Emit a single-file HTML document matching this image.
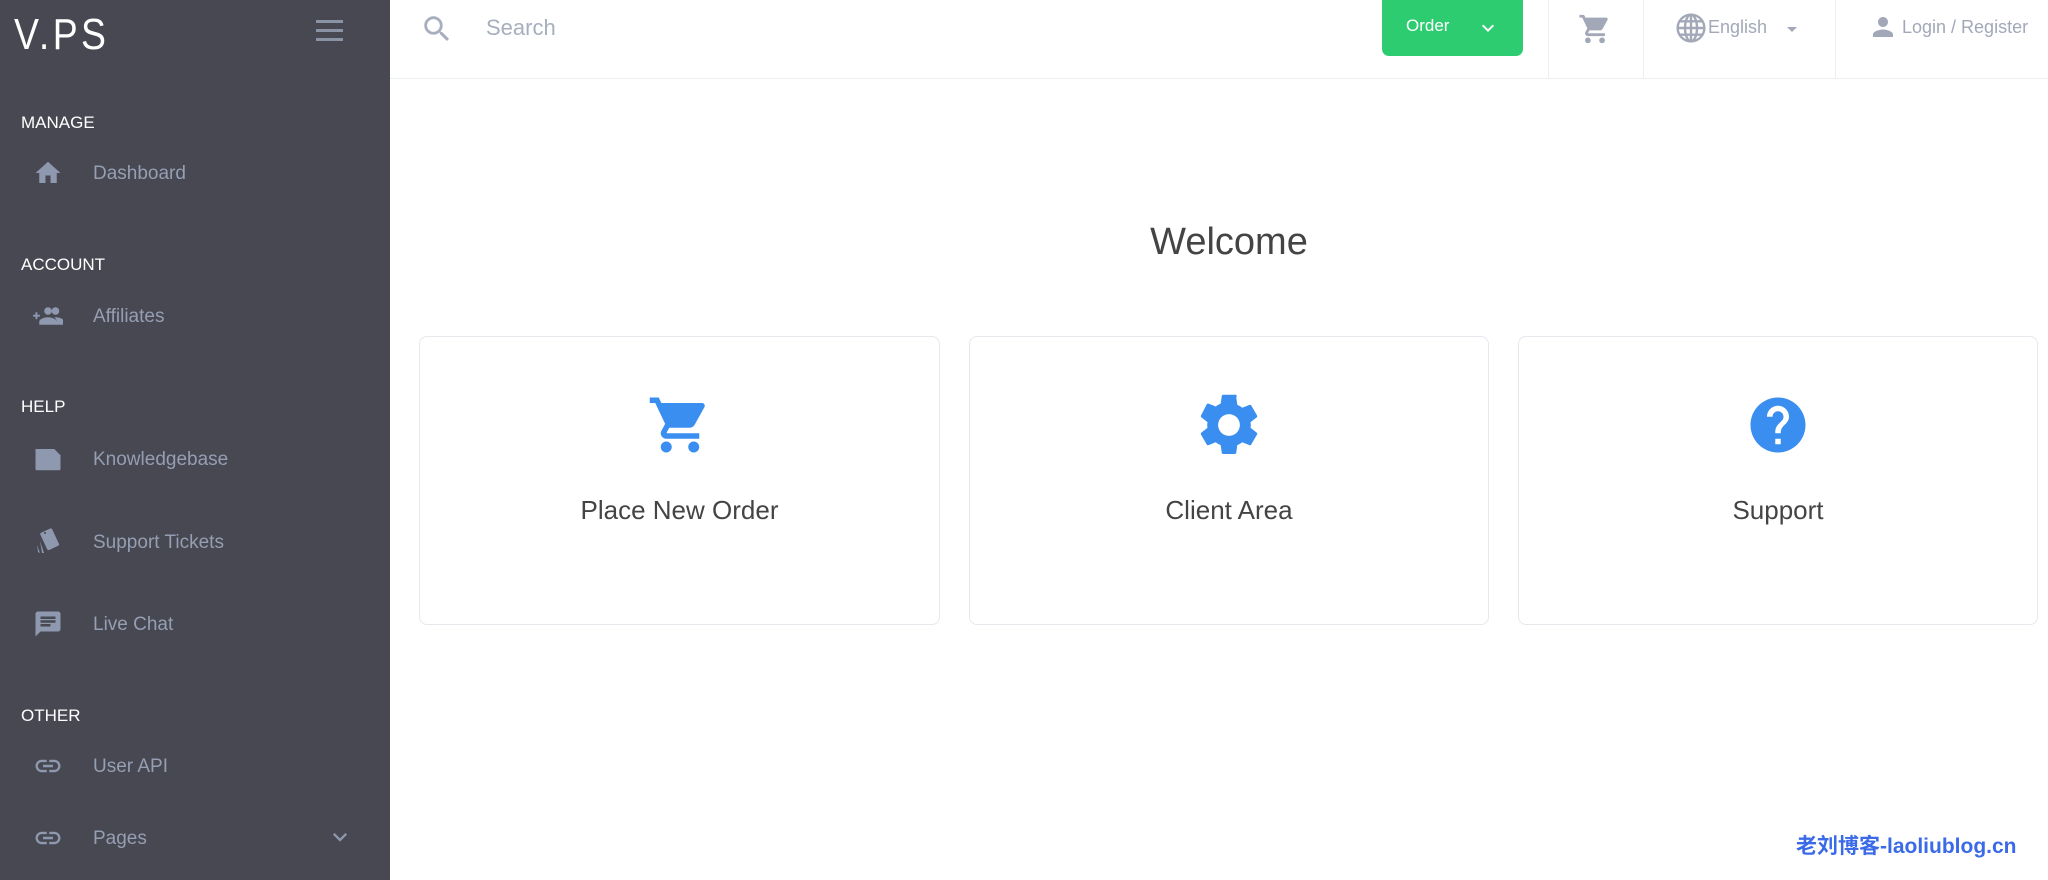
<!DOCTYPE html>
<html><head><meta charset="utf-8"><style>
*{margin:0;padding:0;box-sizing:border-box}
body{width:2048px;height:880px;overflow:hidden;background:#fff;font-family:"Liberation Sans",sans-serif;position:relative}
.sb{position:absolute;left:0;top:0;width:390px;height:880px;background:#474851}
.logo{position:absolute;left:14px;top:10px;color:#fff;font-size:44px;letter-spacing:4px;font-weight:300;transform:scaleX(0.85);transform-origin:left}
.burger{position:absolute;left:316px;top:20px;width:27px}
.burger i{display:block;height:3px;background:#8a93a6;margin-bottom:6px}
.lbl{position:absolute;left:21px;color:#fff;font-size:17px;line-height:20px}
.it{position:absolute;left:0;width:390px;height:30px;color:#959eb3;font-size:19px}
.it svg{position:absolute;left:33px;top:0;width:30px;height:30px;fill:#8e98ae}
.it span{position:absolute;left:93px;top:5px}
.hd{position:absolute;left:390px;top:0;right:0;height:79px;border-bottom:1px solid #eceef2}
.srch{position:absolute;left:486px;top:15px;color:#a7aebd;font-size:22px}
.order{position:absolute;left:1382px;top:0;width:141px;height:56px;background:#2ecc71;border-radius:0 0 7px 7px;color:#fff;font-size:17px}
.vd{position:absolute;top:0;height:79px;width:1px;background:#eceef2}
.hx{position:absolute;color:#a2a8b8;font-size:18px;top:17px}
.wel{position:absolute;left:410px;right:0;top:221px;text-align:center;font-size:38px;color:#444;}
.card{position:absolute;top:336px;height:289px;border:1px solid #e6e8ee;border-radius:8px;text-align:center}
.card .t{position:absolute;left:0;right:0;top:158px;font-size:26px;color:#444}
.card svg{position:absolute;left:50%;top:55px;margin-left:-33px;width:66px;height:66px;fill:#3a8ef0}
.wm{position:absolute;left:1796px;top:830px;color:#3b6ae8;font-size:21px;font-weight:bold;font-family:"Liberation Sans","Noto Sans CJK SC",sans-serif}
</style></head><body>
<div class="sb">
<div class="logo">V.PS</div>
<div class="burger"><i></i><i></i><i></i></div>
<div class="lbl" style="top:113px">MANAGE</div>
<div class="it" style="top:158px"><svg viewBox="0 0 24 24"><path d="M10 20v-6h4v6h5v-8h3L12 3 2 12h3v8z"/></svg><span>Dashboard</span></div>
<div class="lbl" style="top:255px">ACCOUNT</div>
<div class="it" style="top:301px"><svg viewBox="0 0 24 24"><path d="M16 11c1.66 0 3-1.34 3-3s-1.34-3-3-3-3 1.34-3 3 1.34 3 3 3zm-6 0c1.66 0 3-1.34 3-3s-1.34-3-3-3-3 1.34-3 3 1.34 3 3 3zm0 2c-2.33 0-7 1.17-7 3.5V19h14v-2.5C17 14.17 12.33 13 10 13zm6 0c-.29 0-.62.02-.97.05 1.16.84 1.97 1.97 1.97 3.45V19h6v-2.5c0-2.33-4.67-3.5-7-3.5z" transform="translate(2 0)"/><path d="M0 11h2V9h1.5v2h2v1.5h-2v2H2v-2H0z"/></svg><span>Affiliates</span></div>
<div class="lbl" style="top:397px">HELP</div>
<div class="it" style="top:444px"><svg viewBox="0 0 24 24"><path d="M2 4h15l5 5v11a1 1 0 0 1-1 1H3a1 1 0 0 1-1-1z"/></svg><span>Knowledgebase</span></div>
<div class="it" style="top:527px"><svg viewBox="0 0 30 30"><rect x="10" y="3" width="13" height="19" rx="1.5" transform="rotate(-25 16 12)"/><circle cx="12" cy="6" r="1" fill="#474851"/><path d="M7 14l4 12-2 0z M4 18l3 8-2-1z"/></svg><span>Support Tickets</span></div>
<div class="it" style="top:609px"><svg viewBox="0 0 24 24"><path d="M20 2H4c-1.1 0-2 .9-2 2v18l4-4h14c1.1 0 2-.9 2-2V4c0-1.1-.9-2-2-2zM6 9h12v2H6zm8 5H6v-2h8zm4-6H6V6h12z"/></svg><span>Live Chat</span></div>
<div class="lbl" style="top:706px">OTHER</div>
<div class="it" style="top:751px"><svg viewBox="0 0 24 24"><path d="M3.9 12c0-1.71 1.39-3.1 3.1-3.1h4V7H7c-2.76 0-5 2.24-5 5s2.24 5 5 5h4v-1.9H7c-1.71 0-3.1-1.39-3.1-3.1zM8 13h8v-2H8v2zm9-6h-4v1.9h4c1.71 0 3.1 1.39 3.1 3.1s-1.39 3.1-3.1 3.1h-4V17h4c2.76 0 5-2.24 5-5s-2.24-5-5-5z"/></svg><span>User API</span></div>
<div class="it" style="top:823px"><svg viewBox="0 0 24 24"><path d="M3.9 12c0-1.71 1.39-3.1 3.1-3.1h4V7H7c-2.76 0-5 2.24-5 5s2.24 5 5 5h4v-1.9H7c-1.71 0-3.1-1.39-3.1-3.1zM8 13h8v-2H8v2zm9-6h-4v1.9h4c1.71 0 3.1 1.39 3.1 3.1s-1.39 3.1-3.1 3.1h-4V17h4c2.76 0 5-2.24 5-5s-2.24-5-5-5z"/></svg><span>Pages</span><svg viewBox="0 0 24 24" style="left:326px;width:28px;height:28px"><path d="M7.4 8.6L12 13.2l4.6-4.6L18 10l-6 6-6-6z"/></svg></div>
</div>
<div class="hd"></div>
<svg style="position:absolute;left:420px;top:12px;width:34px;height:34px" viewBox="0 0 24 24" fill="#a7aebd"><path d="M15.5 14h-.79l-.28-.27A6.47 6.47 0 0 0 16 9.5 6.5 6.5 0 1 0 9.5 16c1.61 0 3.09-.59 4.23-1.57l.27.28v.79l5 4.99L20.49 19l-4.99-5zm-6 0C7.01 14 5 11.99 5 9.5S7.01 5 9.5 5 14 7.01 14 9.5 11.99 14 9.5 14z"/></svg>
<div class="srch">Search</div>
<div class="order"><span style="position:absolute;left:24px;top:16px">Order</span><svg style="position:absolute;left:94px;top:16px;width:24px;height:24px" viewBox="0 0 24 24" fill="#fff"><path d="M7.4 8.6L12 13.2l4.6-4.6L18 10l-6 6-6-6z"/></svg></div>
<div class="vd" style="left:1548px"></div><div class="vd" style="left:1643px"></div><div class="vd" style="left:1835px"></div>
<svg style="position:absolute;left:1578px;top:12px;width:34px;height:34px" viewBox="0 0 24 24" fill="#a2a8b8"><path d="M7 18c-1.1 0-2 .9-2 2s.9 2 2 2 2-.9 2-2-.9-2-2-2zM1 2v2h2l3.6 7.59-1.35 2.45c-.16.28-.25.61-.25.96 0 1.1.9 2 2 2h12v-2H7.42c-.14 0-.25-.11-.25-.25l.03-.12.9-1.63h7.45c.75 0 1.41-.41 1.75-1.03l3.58-6.49A1 1 0 0 0 20 4H5.21l-.94-2H1zm16 16c-1.1 0-2 .9-2 2s.9 2 2 2 2-.9 2-2-.9-2-2-2z"/></svg>
<svg style="position:absolute;left:1675px;top:12px;width:32px;height:32px" viewBox="0 0 24 24" fill="none" stroke="#a2a8b8" stroke-width="1.8"><circle cx="12" cy="12" r="10"/><ellipse cx="12" cy="12" rx="4.5" ry="10"/><path d="M2 12h20M4 7h16M4 17h16M12 2v20"/></svg>
<div class="hx" style="left:1708px">English</div>
<svg style="position:absolute;left:1780px;top:17px;width:24px;height:24px" viewBox="0 0 24 24" fill="#a2a8b8"><path d="M7 10l5 5 5-5z"/></svg>
<svg style="position:absolute;left:1868px;top:12px;width:30px;height:30px" viewBox="0 0 24 24" fill="#a2a8b8"><path d="M12 12c2.21 0 4-1.79 4-4s-1.79-4-4-4-4 1.79-4 4 1.79 4 4 4zm0 2c-2.67 0-8 1.34-8 4v2h16v-2c0-2.66-5.33-4-8-4z"/></svg>
<div class="hx" style="left:1902px">Login / Register</div>
<div class="wel">Welcome</div>
<div class="card" style="left:419px;width:521px"><svg viewBox="0 0 24 24"><path d="M7 18c-1.1 0-2 .9-2 2s.9 2 2 2 2-.9 2-2-.9-2-2-2zM1 2v2h2l3.6 7.59-1.35 2.45c-.16.28-.25.61-.25.96 0 1.1.9 2 2 2h12v-2H7.42c-.14 0-.25-.11-.25-.25l.03-.12.9-1.63h7.45c.75 0 1.41-.41 1.75-1.03l3.58-6.49A1 1 0 0 0 20 4H5.21l-.94-2H1zm16 16c-1.1 0-2 .9-2 2s.9 2 2 2 2-.9 2-2-.9-2-2-2z"/></svg><div class="t">Place New Order</div></div>
<div class="card" style="left:969px;width:520px"><svg viewBox="0 0 24 24"><path d="M19.14 12.94c.04-.3.06-.61.06-.94s-.02-.64-.07-.94l2.03-1.58a.49.49 0 0 0 .12-.61l-1.92-3.32a.49.49 0 0 0-.59-.22l-2.39.96c-.5-.38-1.03-.7-1.62-.94l-.36-2.54A.48.48 0 0 0 13.92 2h-3.84c-.24 0-.43.17-.47.41l-.36 2.54c-.59.24-1.13.57-1.62.94l-2.39-.96a.48.48 0 0 0-.59.22L2.74 8.87a.47.47 0 0 0 .12.61l2.03 1.58c-.05.3-.09.63-.09.94s.02.64.07.94l-2.03 1.58a.49.49 0 0 0-.12.61l1.92 3.32c.12.22.37.29.59.22l2.39-.96c.5.38 1.03.7 1.62.94l.36 2.54c.05.24.24.41.48.41h3.84c.24 0 .44-.17.47-.41l.36-2.54c.59-.24 1.13-.56 1.62-.94l2.39.96c.22.08.47 0 .59-.22l1.92-3.32a.47.47 0 0 0-.12-.61l-2.01-1.58zM12 15.6A3.6 3.6 0 1 1 12 8.4a3.6 3.6 0 0 1 0 7.2z" transform="translate(12 12) scale(1.1) translate(-12 -12)"/><circle cx="12" cy="12" r="3" fill="#fff"/></svg><div class="t">Client Area</div></div>
<div class="card" style="left:1518px;width:520px"><svg viewBox="0 0 24 24"><path d="M12 2C6.48 2 2 6.48 2 12s4.48 10 10 10 10-4.48 10-10S17.52 2 12 2zm1 17h-2v-2h2v2zm2.07-7.75l-.9.92C13.45 12.9 13 13.5 13 15h-2v-.5c0-1.1.45-2.1 1.17-2.830l1.24-1.26c.37-.36.59-.86.59-1.41 0-1.1-.9-2-2-2s-2 .9-2 2H8c0-2.21 1.79-4 4-4s4 1.79 4 4c0 .88-.36 1.68-.93 2.25z"/></svg><div class="t">Support</div></div>
<div class="wm">老刘博客-laoliublog.cn</div>
</body></html>
